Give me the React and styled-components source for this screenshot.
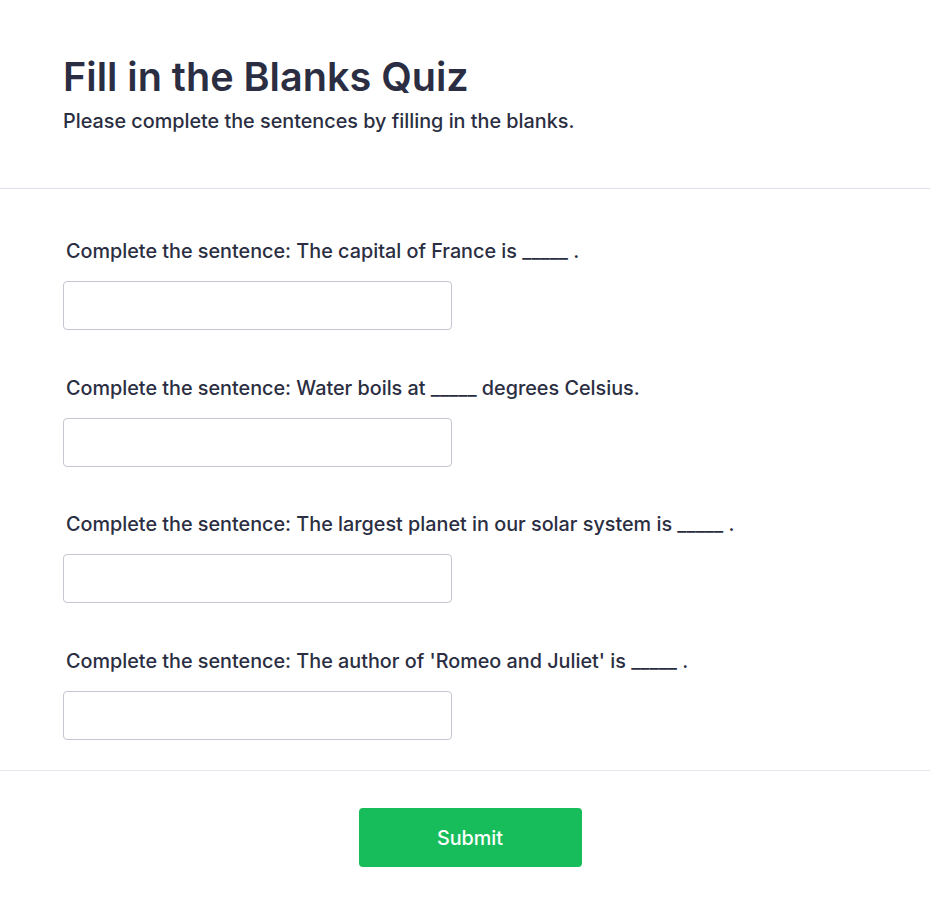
import React from 'react';
import styled, { createGlobalStyle } from 'styled-components';

const questions = [
  "Complete the sentence: The capital of France is _____ .",
  'Complete the sentence: Water boils at _____ degrees Celsius.',
  'Complete the sentence: The largest planet in our solar system is _____ .',
  "Complete the sentence: The author of 'Romeo and Juliet' is _____ .",
];

const GlobalStyle = createGlobalStyle`
  body {
    margin: 0;
    background: #ffffff;
    font-family: Inter, "Noto Sans", sans-serif;
    color: #2b2e42;
  }
`;

const Page = styled.div`
  display: flex;
  flex-direction: column;
`;

const Header = styled.header`
  padding: 53px 63px 53px;
  border-bottom: 1px solid #dfe1ea;
`;

const Title = styled.h1`
  margin: 0;
  font-size: 39.6px;
  line-height: 48px;
  font-weight: 600;
  color: #2b2e42;
`;

const Subtitle = styled.p`
  margin: 6px 0 0;
  font-size: 19.8px;
  line-height: 28px;
  font-weight: 500;
  color: #2b2e42;
`;

const Questions = styled.form`
  display: flex;
  flex-direction: column;
  gap: 43.5px;
  padding: 48px 63px 30.5px;
  border-bottom: 1px solid #e6e7ee;
`;

const Question = styled.div`
  display: flex;
  flex-direction: column;
  gap: 16px;
`;

const Label = styled.label`
  padding-left: 3px;
  font-size: 19.8px;
  line-height: 28px;
  font-weight: 500;
  color: #2b2e42;
`;

const Input = styled.input`
  box-sizing: border-box;
  width: 389px;
  height: 49px;
  border: 1px solid #c4c6d2;
  border-radius: 4px;
  background: #ffffff;
  font: inherit;
  padding: 0 12px;
`;

const Footer = styled.div`
  display: flex;
  justify-content: center;
  padding: 37px 0 40px 10px;
`;

const SubmitButton = styled.button`
  width: 223px;
  height: 59px;
  border: none;
  border-radius: 4px;
  background: #18bd5b;
  color: #ffffff;
  font-family: Inter, "Noto Sans", sans-serif;
  font-size: 19.8px;
  font-weight: 500;
  cursor: pointer;
`;

const App = () => {
  return (
    <Page>
      <GlobalStyle />
      <Header>
        <Title>Fill in the Blanks Quiz</Title>
        <Subtitle>Please complete the sentences by filling in the blanks.</Subtitle>
      </Header>
      <Questions>
        {questions.map((q, i) => (
          <Question key={i}>
            <Label htmlFor={`q${i}`}>{q}</Label>
            <Input id={`q${i}`} type="text" />
          </Question>
        ))}
      </Questions>
      <Footer>
        <SubmitButton type="button">Submit</SubmitButton>
      </Footer>
    </Page>
  );
};

export default App;
